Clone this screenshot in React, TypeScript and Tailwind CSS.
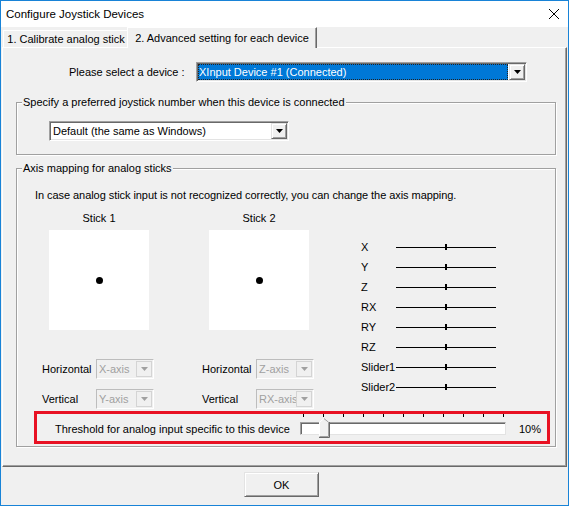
import React from 'react';

const sunken =
  'border border-t-[#a0a0a0] border-l-[#a0a0a0] border-r-white border-b-white shadow-[inset_1px_1px_0_#696969,inset_-1px_-1px_0_#e3e3e3]';
const raised =
  'border border-t-[#e3e3e3] border-l-[#e3e3e3] border-r-[#696969] border-b-[#696969] shadow-[inset_1px_1px_0_#ffffff,inset_-1px_-1px_0_#a0a0a0]';

const Arrow = ({ color = '#000' }: { color?: string }) => (
  <svg width="7" height="4" viewBox="0 0 7 4">
    <polygon points="0,0 7,0 3.5,4" fill={color} />
  </svg>
);

type ComboProps = {
  text: string;
  className: string;
  selected?: boolean;
  disabled?: boolean;
};

const Combo = ({ text, className, selected, disabled }: ComboProps) => {
  if (disabled) {
    return (
      <div
        className={`flex h-[20px] p-[1px] border border-t-[#bdbdbd] border-l-[#bdbdbd] border-r-white border-b-white bg-[#f0f0f0] ${className}`}
      >
        <div className="flex-1 min-w-0 flex items-center pl-[1px] text-[#a0a0a0] whitespace-nowrap">
          {text}
        </div>
        <div className="relative w-[16px] h-[16px] shrink-0 flex items-center justify-center border border-[#d4d4d4] bg-[#f0f0f0]">
          <Arrow color="#a0a0a0" />
        </div>
      </div>
    );
  }
  return (
    <div className={`flex h-[20px] p-[1px] bg-white ${sunken} ${className}`}>
      <div
        className={`flex-1 min-w-0 flex items-center whitespace-nowrap overflow-hidden mr-[1px] ${
          selected
            ? 'bg-[#0078d7] text-white border border-dotted border-[#222]'
            : 'pl-[2px]'
        }`}
      >
        {text}
      </div>
      <div className={`w-[16px] h-[16px] shrink-0 flex items-center justify-center bg-[#f0f0f0] ${raised}`}>
        <Arrow />
      </div>
    </div>
  );
};

const GroupBox = ({
  title,
  className,
  children,
}: {
  title: string;
  className: string;
  children: React.ReactNode;
}) => (
  <div
    className={`relative border border-[#a0a0a0] shadow-[inset_1px_1px_0_#ffffff,1px_1px_0_#ffffff] ${className}`}
  >
    <span className="absolute -top-[8px] left-[5px] px-[1px] bg-[#f0f0f0] leading-[14px] whitespace-nowrap">
      {title}
    </span>
    {children}
  </div>
);

const StickColumn = ({
  name,
  horizontal,
  vertical,
  className,
}: {
  name: string;
  horizontal: string;
  vertical: string;
  className: string;
}) => (
  <div className={`flex flex-col ${className}`}>
    <div className="ml-[7px] w-[100px] text-center leading-[14px]">{name}</div>
    <div className="ml-[7px] mt-[5px] w-[100px] h-[100px] bg-white flex items-center justify-center">
      <div className="w-[7px] h-[7px] rounded-full bg-black" />
    </div>
    <div className="mt-[29px] flex items-center h-[20px]">
      <span className="w-[54px]">Horizontal</span>
      <Combo text={horizontal} className="w-[58px]" disabled />
    </div>
    <div className="mt-[10px] flex items-center h-[20px]">
      <span className="w-[54px]">Vertical</span>
      <Combo text={vertical} className="w-[58px]" disabled />
    </div>
  </div>
);

const axes = ['X', 'Y', 'Z', 'RX', 'RY', 'RZ', 'Slider1', 'Slider2'];

const AxisList = () => (
  <div className="mt-[26px] flex flex-col">
    {axes.map((axis) => (
      <div key={axis} className="flex items-center h-[20px]">
        <span className="w-[35px] whitespace-nowrap">{axis}</span>
        <div className="flex items-center w-[100px]">
          <div className="h-[1px] w-[49px] bg-black" />
          <div className="h-[6px] w-[2px] bg-black" />
          <div className="h-[1px] w-[49px] bg-black" />
        </div>
      </div>
    ))}
  </div>
);

const ThresholdSlider = ({ value }: { value: number }) => {
  const ticks = Array.from({ length: 11 }, (_, i) => i);
  return (
    <div className="w-[208px] flex flex-col">
      <div className="ml-[4px] flex gap-[19px] h-[3px]">
        {ticks.map((t) => (
          <div key={t} className="w-[1px] h-[3px] bg-black" />
        ))}
      </div>
      <div className="relative mt-[5px] ml-[1px] w-[206px] h-[13px] bg-white border border-t-[#a0a0a0] border-l-[#a0a0a0] border-r-[#e3e3e3] border-b-[#e3e3e3] shadow-[inset_1px_1px_0_#696969]">
        <svg
          className="absolute -top-[5px]"
          style={{ left: value * 2 - 2 }}
          width="11"
          height="20"
          viewBox="0 0 11 20"
        >
          <polygon points="0,4 5,0 10,4 10,19 0,19" fill="#f0f0f0" />
          <polyline points="0.5,19 0.5,4.2 5,0.6" fill="none" stroke="#ffffff" strokeWidth="1" />
          <polyline points="5,0.6 9.5,4.2 9.5,18.5 0.5,18.5" fill="none" stroke="#a0a0a0" strokeWidth="1" />
          <polyline points="10.5,4 10.5,19.5 0,19.5" fill="none" stroke="#696969" strokeWidth="1" />
        </svg>
      </div>
    </div>
  );
};

export default function App() {
  return (
    <div className="w-[569px] h-[506px] flex flex-col border border-[#1883d7] bg-[#f0f0f0] text-black text-[11px] leading-[14px] font-['Liberation_Sans',Arial,sans-serif] overflow-hidden">
      {/* title bar */}
      <div className="h-[26px] shrink-0 bg-white flex items-center justify-between pl-[5px] pr-[9px]">
        <span className="text-[11.5px]">Configure Joystick Devices</span>
        <svg width="10" height="10" viewBox="0 0 10 10">
          <path d="M0 0 L10 10 M10 0 L0 10" stroke="#000" strokeWidth="1" />
        </svg>
      </div>

      {/* tabs */}
      <div className="h-[20px] shrink-0 flex items-end pl-[2px]">
        <div className="w-[126px] h-[17px] flex items-center justify-center border-t border-l border-white border-r border-r-[#a0a0a0]">
          1. Calibrate analog stick
        </div>
        <div className="relative z-10 -ml-[2px] -mb-[1px] w-[190px] h-[21px] flex items-center justify-center bg-[#f0f0f0] border-t border-l border-white border-r border-r-[#696969] shadow-[inset_-1px_0_0_#a0a0a0]">
          2. Advanced setting for each device
        </div>
      </div>

      {/* tab panel */}
      <div className="mx-[1px] h-[420px] shrink-0 flex flex-col border border-t-white border-l-white border-r-[#696969] border-b-[#696969] shadow-[inset_-1px_-1px_0_#a0a0a0]">
        <div className="mt-[14px] flex items-center h-[20px]">
          <span className="ml-[66px] w-[127px]">Please select a device :</span>
          <Combo text="XInput Device #1 (Connected)" className="w-[331px]" selected />
        </div>

        <GroupBox
          title="Specify a preferred joystick number when this device is connected"
          className="mt-[20px] ml-[13px] w-[540px] h-[53px]"
        >
          <div className="mt-[18px] ml-[32px]">
            <Combo text="Default (the same as Windows)" className="w-[240px]" />
          </div>
        </GroupBox>

        <GroupBox
          title="Axis mapping for analog sticks"
          className="mt-[13px] ml-[13px] w-[540px] h-[279px] flex flex-col"
        >
          <div className="mt-[19px] pl-[18px] leading-[14px] tracking-[-0.06px]">
            In case analog stick input is not recognized correctly, you can change the axis mapping.
          </div>

          <div className="mt-[9px] pl-[25px] flex items-start">
            <StickColumn name="Stick 1" horizontal="X-axis" vertical="Y-axis" className="w-[160px]" />
            <StickColumn name="Stick 2" horizontal="Z-axis" vertical="RX-axis" className="w-[159px]" />
            <AxisList />
          </div>

          <div className="mt-[2px] ml-[17px] w-[516px] h-[33px] border-[3px] border-[#e81123] flex items-start">
            <div className="w-[262px] pl-[18px] mt-[8px] whitespace-nowrap">
              Threshold for analog input specific to this device
            </div>
            <ThresholdSlider value={10} />
            <div className="ml-[12px] mt-[8px]">10%</div>
          </div>
        </GroupBox>
      </div>

      {/* buttons */}
      <div className="flex-1 flex items-start">
        <button
          className={`mt-[5px] ml-[243px] w-[75px] h-[25px] flex items-center justify-center bg-[#f0f0f0] ${raised}`}
        >
          OK
        </button>
      </div>
    </div>
  );
}
